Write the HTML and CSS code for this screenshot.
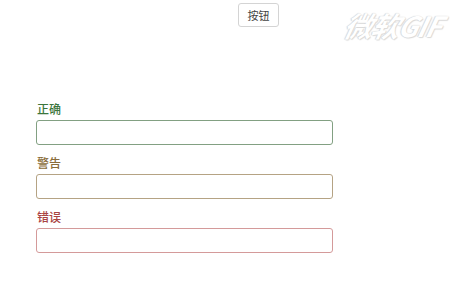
FILE: index.html
```html
<!DOCTYPE html>
<html>
<head>
<meta charset="utf-8">
<link rel="stylesheet" href="styles.css">
</head>
<body>
<div class="top">
  <button class="btn">按钮</button>
</div>
<div class="watermark">微软GIF</div>
<form class="form">
  <div class="group success">
    <label class="label">正确</label>
    <input class="input" type="text">
  </div>
  <div class="group warning">
    <label class="label">警告</label>
    <input class="input" type="text">
  </div>
  <div class="group error">
    <label class="label">错误</label>
    <input class="input" type="text">
  </div>
</form>
</body>
</html>
```
FILE: styles.css
```css
html, body {
  margin: 0;
  padding: 0;
  background: #fff;
  font-family: "Noto Sans CJK SC", "Noto Sans", sans-serif;
}
.top {
  padding: 3px 0 0 238px;
  height: 24px;
}
.btn {
  display: block;
  box-sizing: border-box;
  width: 41px;
  height: 24px;
  padding: 0;
  border: 1px solid #d4d4d4;
  border-radius: 3px;
  background: #fff;
  font-family: "Noto Sans CJK SC", sans-serif;
  font-size: 11px;
  color: #444;
  line-height: 22px;
}
.watermark {
  position: absolute;
  left: 345px;
  top: 5px;
  font-family: "Noto Sans CJK SC", sans-serif;
  font-size: 28px;
  font-style: italic;
  font-weight: bold;
  color: #fff;
  letter-spacing: -1px;
  transform: skewX(-12deg);
  text-shadow: 0 0 1px #d0d0d0, 1px 1px 1px #dadada, -1px 0 1px #dadada;
}
.form {
  margin: 73px 0 0 36px;
  width: 297px;
}
.group {
  display: flex;
  flex-direction: column;
  gap: 3px;
  margin-bottom: 9px;
}
.label {
  font-size: 12px;
  line-height: 17px;
  padding-left: 1px;
  font-weight: 500;
}
.input {
  box-sizing: border-box;
  width: 297px;
  height: 25px;
  margin: 0;
  border-radius: 3px;
  background: #fff;
  outline: none;
}
.success .label { color: #3c763d; }
.success .input { border: 1px solid #82a082; }
.warning .label { color: #8a6d3b; }
.warning .input { border: 1px solid #b5a384; }
.error .label { color: #a94442; }
.error .input { border: 1px solid #d49a9a; }
```
